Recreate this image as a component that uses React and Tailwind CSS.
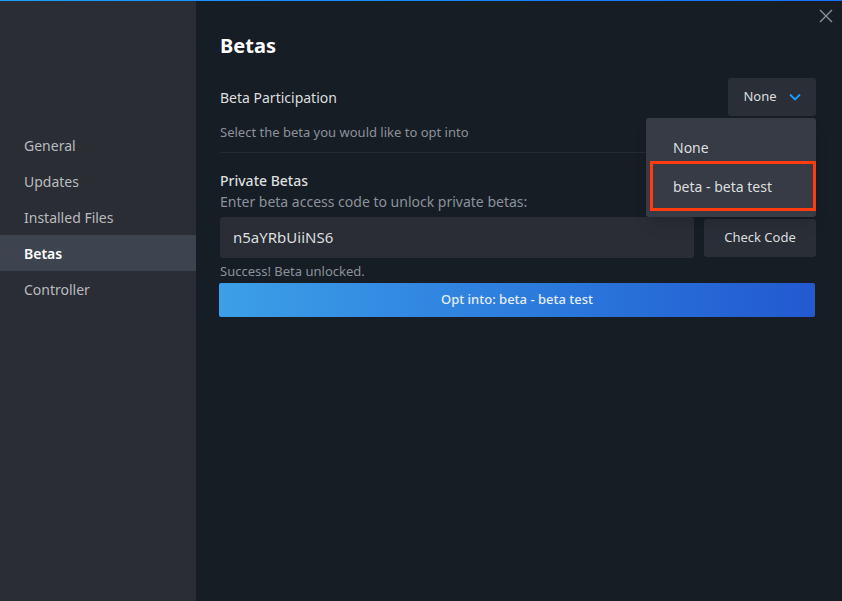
import { useState } from "react";

const NAV_ITEMS = ["General", "Updates", "Installed Files", "Betas", "Controller"];

const App = () => {
  const [active] = useState("Betas");

  return (
    <div
      className="relative flex h-[601px] w-[842px] overflow-hidden bg-[#171d25] text-[#dcdedf]"
      style={{ fontFamily: '"Noto Sans", "Liberation Sans", sans-serif' }}
    >
      {/* top accent line */}
      <div className="absolute left-0 right-0 top-0 h-px bg-gradient-to-r from-[#1a9fff] to-[#1a6fff]" />

      {/* Sidebar */}
      <div className="flex w-[196px] shrink-0 flex-col bg-[#2a2d34] pt-[127px]">
        {NAV_ITEMS.map((item) => (
          <div
            key={item}
            className={
              item === active
                ? "flex h-9 items-center bg-[#3d4450] pl-6 text-[14px] font-semibold text-white"
                : "flex h-9 items-center pl-6 text-[14px] text-[#b8bcbf]"
            }
          >
            {item}
          </div>
        ))}
      </div>

      {/* Main */}
      <div className="relative flex-1 pl-6 pr-[26px] pt-[31px]">
        {/* close */}
        <button className="absolute right-[9px] top-[9px] text-[#8b929a]">
          <svg width="14" height="14" viewBox="0 0 14 14" fill="none" stroke="currentColor" strokeWidth="1.4">
            <path d="M1 1 L13 13 M13 1 L1 13" />
          </svg>
        </button>

        <h1 className="text-[20px] font-bold leading-[30px] text-white">Betas</h1>

        <div className="mt-[17px] flex items-center justify-between">
          <div className="text-[14px] text-[#dcdedf]">Beta Participation</div>
          <button className="flex h-[38px] w-[88px] items-center justify-center gap-3 rounded-[3px] bg-[#2a2e37] text-[13px] text-[#dcdedf]">
            None
            <svg width="12" height="8" viewBox="0 0 12 8" fill="none" stroke="#1a9fff" strokeWidth="1.8">
              <path d="M1 1.5 L6 6.5 L11 1.5" />
            </svg>
          </button>
        </div>

        <div className="mt-[7px] text-[13px] text-[#8b929a]">Select the beta you would like to opt into</div>
        <div className="mt-[9px] h-px bg-[#262b33]" />

        <div className="mt-[17px] text-[14px] font-medium text-[#dcdedf]">Private Betas</div>
        <div className="text-[14px] leading-[22px] text-[#8b929a]">Enter beta access code to unlock private betas:</div>

        <div className="mt-[4px] flex gap-[10px]">
          <div className="flex h-[41px] flex-1 items-center rounded-[3px] bg-[#2a2d35] pl-[13px] text-[15px] text-[#dcdedf]">
            n5aYRbUiiNS6
          </div>
          <button className="mt-[2px] h-[38px] w-[112px] rounded-[3px] bg-[#2a2e37] text-[13px] text-[#dcdedf]">
            Check Code
          </button>
        </div>

        <div className="mt-[4px] text-[13px] text-[#8b929a]">Success! Beta unlocked.</div>

        <button className="mt-[2px] h-[34px] w-[596px] -ml-px rounded-[2px] bg-gradient-to-r from-[#3d9fe8] to-[#2359d1] text-[13px] font-medium text-[#e6eefa]">
          Opt into: beta - beta test
        </button>

        {/* dropdown menu */}
        <div className="absolute left-[450px] top-[118px] w-[170px] rounded-[3px] bg-[#363b45] pb-[6px] pt-[16px] shadow-lg">
          <div className="flex h-[27px] items-center pl-[27px] text-[14px] text-[#dcdedf]">None</div>
          <div className="ml-[4px] flex h-[50px] items-center border-[3px] border-[#ff3b0f] pl-[20px] text-[14px] text-[#dcdedf]">
            beta - beta test
          </div>
        </div>
      </div>
    </div>
  );
};

export default App;
